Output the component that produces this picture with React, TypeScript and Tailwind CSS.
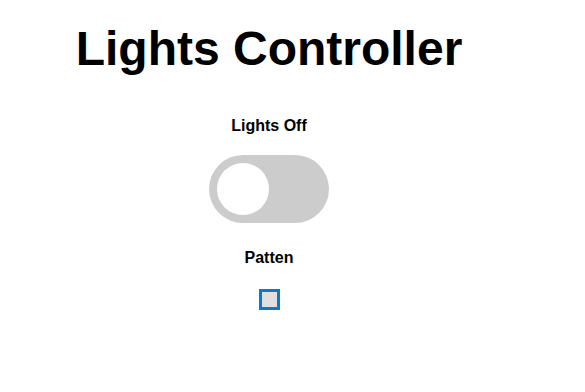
export default function App() {
  return (
    <div className="w-[538px] flex flex-col items-center bg-white text-black" style={{ fontFamily: '"Liberation Sans", Arial, sans-serif' }}>
      <h1 className="mt-[25px] text-[48px] leading-[48px] font-bold">Lights Controller</h1>
      <div className="mt-[44px] text-[16px] leading-[18px] font-bold">Lights Off</div>
      <div className="mt-[20px] w-[120px] h-[68px] rounded-full bg-[#cccccc] p-[8px] flex items-center">
        <div className="w-[52px] h-[52px] rounded-full bg-white" />
      </div>
      <div className="mt-[26px] text-[16px] leading-[18px] font-bold">Patten</div>
      <div className="mt-[22px] w-[21px] h-[21px] border-[3px] border-[#0b78d0] bg-[#e0e0e0]" />
    </div>
  );
}
